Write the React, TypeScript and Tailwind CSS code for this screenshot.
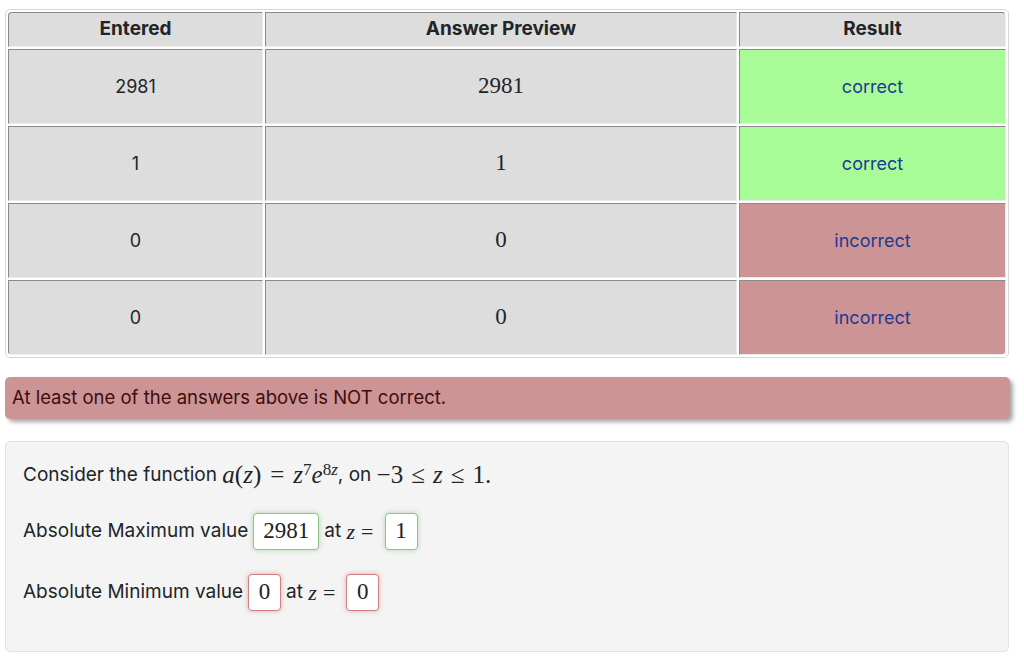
const rows = [
  { entered: '2981', preview: '2981', ok: true },
  { entered: '1', preview: '1', ok: true },
  { entered: '0', preview: '0', ok: false },
  { entered: '0', preview: '0', ok: false },
]

const cell =
  'border border-t-[#8a8a8a] border-l-[#8a8a8a] border-r-[#ececec] border-b-[#ececec] text-center align-middle'

function Answer({ value, ok, w }: { value: string; ok: boolean; w: string }) {
  return (
    <span
      className={`mx-[5px] inline-flex h-[37px] items-center justify-center rounded-[4px] border bg-white font-['Liberation_Serif',serif] text-[23px] text-[#222] ${w} ${
        ok
          ? 'border-[#8fc38a] shadow-[0_0_5px_rgba(90,170,80,0.45)]'
          : 'border-[#d07f7f] shadow-[0_0_5px_rgba(200,80,80,0.45)]'
      }`}
    >
      {value}
    </span>
  )
}

function AtZ() {
  return (
    <>
      at&nbsp;
      <span className="font-['Liberation_Serif',serif] text-[22px]">
        <i>z</i>
        <span className="mx-[6px]">=</span>
      </span>
    </>
  )
}

export default function App() {
  return (
    <div className="min-h-[659px] bg-white px-[5px] pt-[9px] font-['Inter',sans-serif] text-[18px] text-[#212529]">
      <table className="w-[1004px] table-fixed border-separate border-spacing-[2px] rounded-[5px] border border-[#d6d6d6]">
        <colgroup>
          <col className="w-[255px]" />
          <col className="w-[472px]" />
          <col />
        </colgroup>
        <thead>
          <tr className="text-[19px]">
            <th className={`${cell} h-[35px] rounded-tl-[4px] bg-[#dddddd] font-bold`}>Entered</th>
            <th className={`${cell} h-[35px] bg-[#dddddd] font-bold`}>Answer Preview</th>
            <th className={`${cell} h-[35px] rounded-tr-[4px] bg-[#dddddd] font-bold`}>Result</th>
          </tr>
        </thead>
        <tbody>
          {rows.map((r, i) => (
            <tr key={i}>
              <td className={`${cell} h-[75px] bg-[#dddddd] ${i === 3 ? 'rounded-bl-[4px]' : ''}`}>{r.entered}</td>
              <td className={`${cell} h-[75px] bg-[#dddddd] font-['Liberation_Serif',serif] text-[23px]`}>
                {r.preview}
              </td>
              <td
                className={`${cell} h-[75px] text-[#1c3a94] ${r.ok ? 'bg-[#a8fb96]' : 'bg-[#cc9494]'} ${
                  i === 3 ? 'rounded-br-[4px]' : ''
                }`}
              >
                {r.ok ? 'correct' : 'incorrect'}
              </td>
            </tr>
          ))}
        </tbody>
      </table>

      <div className="mt-[19px] flex h-[42px] w-[1005px] items-center rounded-[5px] bg-[#cc9494] px-[7px] text-[18.5px] text-[#3f0c0c] shadow-[3px_3px_4px_rgba(0,0,0,0.35)]">
        At least one of the answers above is NOT correct.
      </div>

      <div className="mt-[22px] flex h-[211px] w-[1004px] flex-col rounded-[5px] border border-[#e2e2e2] bg-[#f4f4f4] px-[17px] pt-[18px] text-[19px]">
        <div className="flex h-[30px] items-center">
          Consider the function&nbsp;
          <span className="font-['Liberation_Serif',serif] text-[25px]">
            <i>a</i>(<i>z</i>)<span className="mx-[9px]">=</span>
            <i>z</i>
            <sup className="text-[17px]">7</sup>
            <i>e</i>
            <sup className="text-[17px]">
              8<i>z</i>
            </sup>
          </span>
          , on&nbsp;
          <span className="font-['Liberation_Serif',serif] text-[25px]">
            −3<span className="mx-[8px]">≤</span>
            <i>z</i>
            <span className="mx-[8px]">≤</span>1.
          </span>
        </div>
        <div className="mt-[23px] flex h-[37px] items-center">
          Absolute Maximum value
          <Answer value="2981" ok w="w-[66px]" />
          <AtZ />
          <Answer value="1" ok w="w-[33px]" />
        </div>
        <div className="mt-[24px] flex h-[37px] items-center">
          Absolute Minimum value
          <Answer value="0" ok={false} w="w-[33px]" />
          <AtZ />
          <Answer value="0" ok={false} w="w-[33px]" />
        </div>
      </div>
    </div>
  )
}
